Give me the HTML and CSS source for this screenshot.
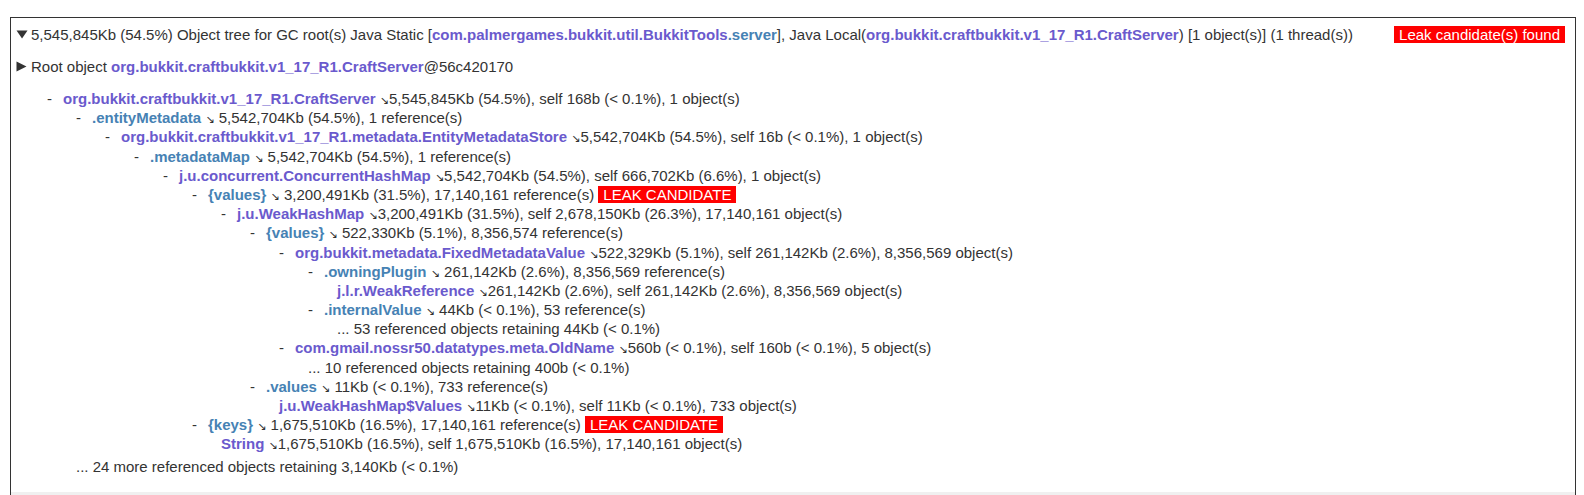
FILE: index.html
```html
<!DOCTYPE html>
<html>
<head>
<meta charset="utf-8">
<link rel="stylesheet" href="styles.css">
</head>
<body>
<div class="box">
  <div class="head">
    <span class="tri down"><svg width="12" height="9" viewBox="0 0 12 9"><path d="M0.5 0.5 L11.5 0.5 L6 8.5 Z" fill="#333"/></svg></span>
    <span class="htext">5,545,845Kb (54.5%) Object tree for GC root(s) Java Static [<b class="cls">com.palmergames.bukkit.util.BukkitTools</b><b class="fld">.server</b>], Java Local(<b class="cls">org.bukkit.craftbukkit.v1_17_R1.CraftServer</b>) [1 object(s)] (1 thread(s))</span>
    <span class="badge big">Leak candidate(s) found</span>
  </div>
  <div class="root">
    <span class="tri right"><svg width="11" height="11" viewBox="0 0 11 11"><path d="M0.5 0.5 L10.5 5.5 L0.5 10.5 Z" fill="#333"/></svg></span>
    <span class="htext">Root object <b class="cls">org.bukkit.craftbukkit.v1_17_R1.CraftServer</b>@56c420170</span>
  </div>
  <ul class="tree top">
    <li>
      <div class="row"><span class="tog">-</span><b class="cls">org.bukkit.craftbukkit.v1_17_R1.CraftServer</b> <span class="arr">↘</span>5,545,845Kb (54.5%), self 168b (&lt; 0.1%), 1 object(s)</div>
      <ul class="tree">
        <li>
          <div class="row"><span class="tog">-</span><b class="fld">.entityMetadata</b> <span class="arr">↘</span> 5,542,704Kb (54.5%), 1 reference(s)</div>
          <ul class="tree">
            <li>
              <div class="row"><span class="tog">-</span><b class="cls">org.bukkit.craftbukkit.v1_17_R1.metadata.EntityMetadataStore</b> <span class="arr">↘</span>5,542,704Kb (54.5%), self 16b (&lt; 0.1%), 1 object(s)</div>
              <ul class="tree">
                <li>
                  <div class="row"><span class="tog">-</span><b class="fld">.metadataMap</b> <span class="arr">↘</span> 5,542,704Kb (54.5%), 1 reference(s)</div>
                  <ul class="tree">
                    <li>
                      <div class="row"><span class="tog">-</span><b class="cls">j.u.concurrent.ConcurrentHashMap</b> <span class="arr">↘</span>5,542,704Kb (54.5%), self 666,702Kb (6.6%), 1 object(s)</div>
                      <ul class="tree">
                        <li>
                          <div class="row"><span class="tog">-</span><b class="fld">{values}</b> <span class="arr">↘</span> 3,200,491Kb (31.5%), 17,140,161 reference(s) <span class="badge">LEAK CANDIDATE</span></div>
                          <ul class="tree">
                            <li>
                              <div class="row"><span class="tog">-</span><b class="cls">j.u.WeakHashMap</b> <span class="arr">↘</span>3,200,491Kb (31.5%), self 2,678,150Kb (26.3%), 17,140,161 object(s)</div>
                              <ul class="tree">
                                <li>
                                  <div class="row"><span class="tog">-</span><b class="fld">{values}</b> <span class="arr">↘</span> 522,330Kb (5.1%), 8,356,574 reference(s)</div>
                                  <ul class="tree">
                                    <li>
                                      <div class="row"><span class="tog">-</span><b class="cls">org.bukkit.metadata.FixedMetadataValue</b> <span class="arr">↘</span>522,329Kb (5.1%), self 261,142Kb (2.6%), 8,356,569 object(s)</div>
                                      <ul class="tree">
                                        <li>
                                          <div class="row"><span class="tog">-</span><b class="fld">.owningPlugin</b> <span class="arr">↘</span> 261,142Kb (2.6%), 8,356,569 reference(s)</div>
                                          <ul class="tree">
                                            <li><div class="row leaf"><b class="cls">j.l.r.WeakReference</b> <span class="arr">↘</span>261,142Kb (2.6%), self 261,142Kb (2.6%), 8,356,569 object(s)</div></li>
                                          </ul>
                                        </li>
                                        <li>
                                          <div class="row"><span class="tog">-</span><b class="fld">.internalValue</b> <span class="arr">↘</span> 44Kb (&lt; 0.1%), 53 reference(s)</div>
                                          <ul class="tree">
                                            <li><div class="row leaf">... 53 referenced objects retaining 44Kb (&lt; 0.1%)</div></li>
                                          </ul>
                                        </li>
                                      </ul>
                                    </li>
                                    <li>
                                      <div class="row"><span class="tog">-</span><b class="cls">com.gmail.nossr50.datatypes.meta.OldName</b> <span class="arr">↘</span>560b (&lt; 0.1%), self 160b (&lt; 0.1%), 5 object(s)</div>
                                      <ul class="tree">
                                        <li><div class="row leaf">... 10 referenced objects retaining 400b (&lt; 0.1%)</div></li>
                                      </ul>
                                    </li>
                                  </ul>
                                </li>
                                <li>
                                  <div class="row"><span class="tog">-</span><b class="fld">.values</b> <span class="arr">↘</span> 11Kb (&lt; 0.1%), 733 reference(s)</div>
                                  <ul class="tree">
                                    <li><div class="row leaf"><b class="cls">j.u.WeakHashMap$Values</b> <span class="arr">↘</span>11Kb (&lt; 0.1%), self 11Kb (&lt; 0.1%), 733 object(s)</div></li>
                                  </ul>
                                </li>
                              </ul>
                            </li>
                          </ul>
                        </li>
                        <li>
                          <div class="row"><span class="tog">-</span><b class="fld">{keys}</b> <span class="arr">↘</span> 1,675,510Kb (16.5%), 17,140,161 reference(s) <span class="badge">LEAK CANDIDATE</span></div>
                          <ul class="tree">
                            <li><div class="row leaf"><b class="cls">String</b> <span class="arr">↘</span>1,675,510Kb (16.5%), self 1,675,510Kb (16.5%), 17,140,161 object(s)</div></li>
                          </ul>
                        </li>
                      </ul>
                    </li>
                  </ul>
                </li>
              </ul>
            </li>
          </ul>
        </li>
        <li><div class="row leaf more">... 24 more referenced objects retaining 3,140Kb (&lt; 0.1%)</div></li>
      </ul>
    </li>
  </ul>
  <div class="foot"></div>
</div>
</body>
</html>
```

FILE: styles.css
```css
html, body {
  margin: 0;
  padding: 0;
  background: #ffffff;
}
body {
  font-family: "Liberation Sans", Arial, sans-serif;
  font-size: 15px;
  color: #333333;
  overflow: hidden;
}
.box {
  margin: 17px 8px 0 10px;
  border: 1px solid #333333;
  border-bottom: none;
  padding-top: 7px;
  height: 600px;
  box-sizing: border-box;
}
.head, .root {
  display: flex;
  align-items: center;
  line-height: 19px;
  height: 19px;
  white-space: nowrap;
}
.head {
  margin-bottom: 13px;
}
.root {
  margin-bottom: 13px;
}
.tri {
  display: inline-flex;
  align-items: center;
  width: 15px;
  margin-left: 5px;
  flex: none;
}
.tri svg {
  display: block;
}
.htext {
  flex: none;
}
.badge {
  background: #ff0000;
  color: #ffffff;
  padding: 0 5px;
  display: inline-block;
  line-height: 17px;
}
.badge.big {
  margin-left: auto;
  margin-right: 10px;
}
b {
  font-weight: bold;
}
.cls {
  color: #6a5acd;
}
.fld {
  color: #4682b4;
}
.arr {
  font-family: "DejaVu Sans", sans-serif;
  font-size: 11px;
  color: #333333;
}
.tree {
  list-style: none;
  margin: 0;
  padding: 0 0 0 29px;
}
.tree.top {
  padding-left: 36px;
}
.row {
  line-height: 19.2px;
  height: 19.2px;
  white-space: nowrap;
}
.tog {
  display: inline-block;
  width: 16px;
}
.more {
  margin-top: 3px;
}
.foot {
  margin-top: 16px;
  height: 20px;
  background: #f0f0f0;
}
```
